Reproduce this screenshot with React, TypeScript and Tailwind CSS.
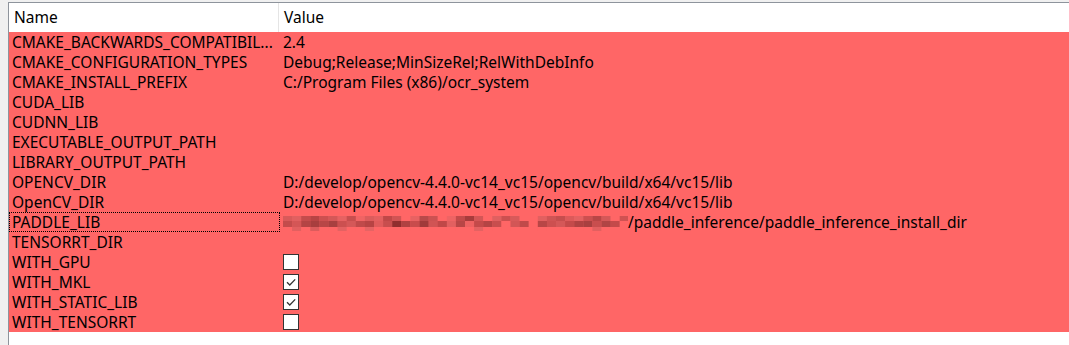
import React from "react";

const rows: { name: string; value?: string; check?: boolean; mosaic?: boolean; focus?: boolean }[] = [
  { name: "CMAKE_BACKWARDS_COMPATIBIL...", value: "2.4" },
  { name: "CMAKE_CONFIGURATION_TYPES", value: "Debug;Release;MinSizeRel;RelWithDebInfo" },
  { name: "CMAKE_INSTALL_PREFIX", value: "C:/Program Files (x86)/ocr_system" },
  { name: "CUDA_LIB", value: "" },
  { name: "CUDNN_LIB", value: "" },
  { name: "EXECUTABLE_OUTPUT_PATH", value: "" },
  { name: "LIBRARY_OUTPUT_PATH", value: "" },
  { name: "OPENCV_DIR", value: "D:/develop/opencv-4.4.0-vc14_vc15/opencv/build/x64/vc15/lib" },
  { name: "OpenCV_DIR", value: "D:/develop/opencv-4.4.0-vc14_vc15/opencv/build/x64/vc15/lib" },
  { name: "PADDLE_LIB", value: "/paddle_inference/paddle_inference_install_dir", mosaic: true, focus: true },
  { name: "TENSORRT_DIR", value: "" },
  { name: "WITH_GPU", check: false },
  { name: "WITH_MKL", check: true },
  { name: "WITH_STATIC_LIB", check: true },
  { name: "WITH_TENSORRT", check: false },
];

const mosaicTop = ["#d85a5a","#e06060","#c44c4c","#b84444","#cc5050","#d45858","#e66262","#c84e4e","#f06464","#dc5c5c","#e46060","#c04848","#d05454","#ff6666","#e86262","#b84a4a","#cc5252","#ff6666","#ee6464","#c44a4a","#a83c3c","#d45656","#ff6666","#e06060","#cc5050","#d85a5a","#ff6666","#ff6666","#e26060","#d05454","#c64e4e","#dc5a5a","#e46262","#cc5050","#b84646","#d45858","#ff6666","#d05252"];
const mosaicMid = ["#c44c4c","#d45656","#b44444","#a83e3e","#b84646","#a84040","#cc5050","#d45858","#c04a4a","#b84444","#e05c5c","#c84e4e","#902e2e","#b04242","#c84c4c","#a03a3a","#d05454","#c04848","#e26060","#b84646","#ee6262","#c44a4a","#b44444","#c84e4e","#ff6666","#d25656","#c04a4a","#ff6666","#b84646","#cc5050","#d45858","#c44a4a","#b04242","#a84040","#c84e4e","#b04444","#c44a4a","#ff6666"];
const mosaicBot = ["#ff6666","#e26060","#ff6666","#dc5c5c","#ff6666","#ff6666","#e46262","#ff6666","#ff6666","#e66464","#ff6666","#ff6666","#ff6666","#ff6666","#ff6666","#ff6666","#ff6666","#ff6666","#ff6666","#ff6666","#ff6666","#e46262","#ff6666","#ff6666","#ff6666","#ff6666","#ff6666","#ff6666","#ff6666","#ff6666","#ff6666","#ff6666","#ff6666","#ff6666","#e26060","#ff6666","#ff6666","#ff6666"];

function Mosaic() {
  const w = 9.1;
  return (
    <svg width={345} height={20} className="shrink-0">
      {mosaicTop.map((c, i) => (
        <rect key={"t" + i} x={i * w} y={4} width={w + 0.2} height={5} fill={c} />
      ))}
      {mosaicMid.map((c, i) => (
        <rect key={"m" + i} x={i * w} y={9} width={w + 0.2} height={6} fill={c} />
      ))}
      {mosaicBot.map((c, i) => (
        <rect key={"b" + i} x={i * w} y={15} width={w + 0.2} height={4} fill={c} />
      ))}
    </svg>
  );
}

function Check({ on }: { on: boolean }) {
  return (
    <div className="w-[16px] h-[16px] border-[1.5px] border-[#333333] bg-white flex items-center justify-center">
      {on && (
        <svg width="12" height="12" viewBox="0 0 12 12">
          <path d="M2 6.2 L4.8 9 L10.2 3.4" fill="none" stroke="#333" strokeWidth="1.3" />
        </svg>
      )}
    </div>
  );
}

export default function App() {
  return (
    <div
      className="w-[1069px] h-[345px] bg-[#f0f0f0] pt-[2px] pl-[8px] overflow-hidden text-black"
      style={{ fontFamily: '"Microsoft YaHei UI", "Noto Sans", "Liberation Sans", sans-serif' }}
    >
      <div className="border-t border-l border-[#8e949c] bg-white h-[343px] w-[1061px]">
        <div className="flex h-[29px] items-center text-[15.5px]">
          <div className="w-[270px] pl-[5px] pt-[1px] border-r border-[#e5e5e5] h-full flex items-center">Name</div>
          <div className="pl-[5px] pt-[1px]">Value</div>
        </div>
        <div className="bg-[#ff6666] text-[15.5px] leading-[20px]">
          {rows.map((r) => (
            <div key={r.name} className="flex h-[20px] items-center">
              <div
                className={
                  "w-[271px] shrink-0 h-[20px] pl-[3px] whitespace-nowrap " +
                  (r.focus ? "outline outline-1 outline-dotted outline-black -outline-offset-1" : "")
                }
              >
                {r.name}
              </div>
              <div className="pl-[3px] flex items-center whitespace-nowrap h-[20px]">
                {r.check !== undefined ? (
                  <Check on={r.check} />
                ) : r.mosaic ? (
                  <>
                    <Mosaic />
                    <span>{r.value}</span>
                  </>
                ) : (
                  <span>{r.value}</span>
                )}
              </div>
            </div>
          ))}
        </div>
      </div>
    </div>
  );
}
